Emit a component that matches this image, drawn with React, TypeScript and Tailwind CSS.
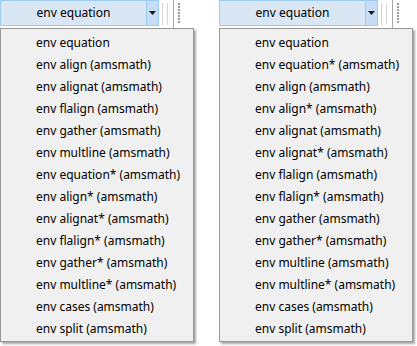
import React from "react";

const leftItems = [
  "env equation",
  "env align (amsmath)",
  "env alignat (amsmath)",
  "env flalign (amsmath)",
  "env gather (amsmath)",
  "env multline (amsmath)",
  "env equation* (amsmath)",
  "env align* (amsmath)",
  "env alignat* (amsmath)",
  "env flalign* (amsmath)",
  "env gather* (amsmath)",
  "env multline* (amsmath)",
  "env cases (amsmath)",
  "env split (amsmath)",
];

const rightItems = [
  "env equation",
  "env equation* (amsmath)",
  "env align (amsmath)",
  "env align* (amsmath)",
  "env alignat (amsmath)",
  "env alignat* (amsmath)",
  "env flalign (amsmath)",
  "env flalign* (amsmath)",
  "env gather (amsmath)",
  "env gather* (amsmath)",
  "env multline (amsmath)",
  "env multline* (amsmath)",
  "env cases (amsmath)",
  "env split (amsmath)",
];

function Panel({ items }: { items: string[] }) {
  return (
    <div className="flex flex-col">
      <div className="flex h-[28px] items-start">
        <div className="flex h-[26px] w-[159px] border border-[#9ecbf0] bg-[#d9e7f4]">
          <div className="flex flex-1 items-center justify-center text-[12px] text-black">
            env equation
          </div>
          <div className="flex w-[12px] items-center justify-center border-l border-[#9ecbf0] bg-[#c6def5]">
            <svg width="7" height="4" viewBox="0 0 7 4">
              <polygon points="0,0 7,0 3.5,4" fill="#1a1a1a" />
            </svg>
          </div>
        </div>
        <div className="ml-[3px] mt-[3px] h-[22px] w-px bg-[#d4d4d4]" />
        <div className="ml-[4px] mt-[3px] h-[22px] w-px bg-[#d4d4d4]" />
        <div className="ml-[5px] h-[28px] w-px bg-[#a8a8a8]" />
        <div className="ml-[4px] mt-[3px] flex flex-col gap-[1px]">
          {[0, 1, 2, 3, 4, 5, 6].map((i) => (
            <div key={i} className="h-[2px] w-[2px] bg-[#9a9a9a]" />
          ))}
        </div>
      </div>
      <div className="w-[194px] border border-[#979797] bg-[#f0f0f0] pb-[1px] pt-[3px] shadow-[2px_2px_2px_rgba(0,0,0,0.35)]">
        {items.map((t) => (
          <div key={t} className="h-[22px] pl-[35px] text-[12px] leading-[22px] text-black">
            {t}
          </div>
        ))}
      </div>
    </div>
  );
}

export default function App() {
  return (
    <div
      className="flex h-[346px] w-[417px] overflow-hidden bg-white"
      style={{ fontFamily: '"Noto Sans", "Open Sans", sans-serif' }}
    >
      <div className="w-[219px] shrink-0">
        <Panel items={leftItems} />
      </div>
      <div className="w-[198px] shrink-0">
        <Panel items={rightItems} />
      </div>
    </div>
  );
}
